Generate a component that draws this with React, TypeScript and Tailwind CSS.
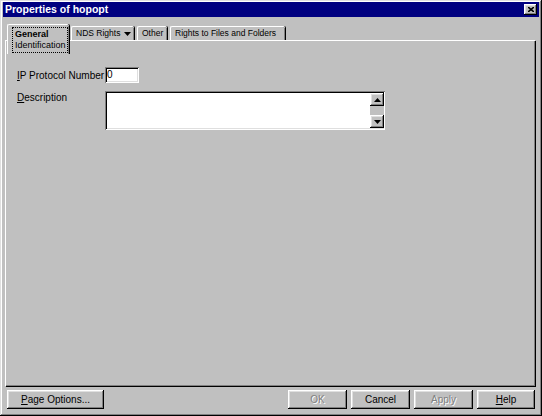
const raised =
  "shadow-[inset_-1px_-1px_#000000,inset_1px_1px_#ffffff,inset_-2px_-2px_#808080,inset_2px_2px_#dfdfdf]";
const sunken =
  "shadow-[inset_1px_1px_#808080,inset_-1px_-1px_#ffffff,inset_2px_2px_#000000,inset_-2px_-2px_#dfdfdf]";

const Button = ({
  children,
  width,
  disabled,
}: {
  children: React.ReactNode;
  width: string;
  disabled?: boolean;
}) => (
  <div
    className={`${width} h-[19px] flex items-center justify-center bg-[#c0c0c0] text-[10px] ${raised} ${
      disabled ? "text-[#808080] [text-shadow:1px_1px_#ffffff]" : "text-black"
    }`}
  >
    {children}
  </div>
);

const ScrollButton = ({ up }: { up?: boolean }) => (
  <div className={`w-[14px] h-[13px] flex items-center justify-center bg-[#c0c0c0] ${raised}`}>
    <svg width="7" height="4" viewBox="0 0 7 4">
      <polygon points={up ? "3.5,0 7,4 0,4" : "0,0 7,0 3.5,4"} fill="#000" />
    </svg>
  </div>
);

const Tab = ({ children, width, ml }: { children: React.ReactNode; width: string; ml: string }) => (
  <div
    className={`${width} ${ml} shrink-0 mt-[2px] h-[14px] flex items-center whitespace-nowrap pl-[4px] text-[8.5px] leading-none text-black border-l border-t border-white rounded-tl-[2px] rounded-tr-[2px] shadow-[inset_-1px_0_#808080,1px_0_#000000]`}
  >
    {children}
  </div>
);

export default function App() {
  return (
    <div
      className="w-[542px] h-[416px] bg-[#c0c0c0] flex flex-col px-[3px] pt-[2px] shadow-[inset_-1px_-1px_#000000,inset_1px_1px_#dfdfdf,inset_-2px_-2px_#808080,inset_2px_2px_#ffffff] overflow-hidden"
      style={{ fontFamily: '"Liberation Sans", Arial, sans-serif' }}
    >
      {/* title bar */}
      <div className="h-[15px] bg-[#000080] flex items-center justify-between pl-[2px] pr-[2px]">
        <span className="text-white text-[10.5px] font-bold leading-none">Properties of hopopt</span>
        <div className={`w-[13px] h-[11px] bg-[#c0c0c0] flex items-center justify-center ${raised}`}>
          <svg width="6" height="5" viewBox="0 0 6 5">
            <path d="M0 0 L6 5 M6 0 L0 5" stroke="#000" strokeWidth="1.6" />
          </svg>
        </div>
      </div>

      {/* tabs */}
      <div className="mt-[7px] h-[16px] flex items-start pl-[4px]">
        <div className="relative z-10 shrink-0 w-[62px] h-[30px] bg-[#c0c0c0] border-l border-t border-white rounded-tl-[2px] rounded-tr-[2px] shadow-[inset_-1px_0_#808080,1px_0_#000000] pt-[2px] pl-[4px] pr-[1px]">
          <div className="h-[26px] border border-dotted border-black flex flex-col pl-[2px] text-[9px] leading-[11px] text-black whitespace-nowrap">
            <span className="font-bold mt-[1px]">General</span>
            <span>Identification</span>
          </div>
        </div>
        <Tab width="w-[63px]" ml="ml-[2px]">
          <span>NDS Rights</span>
          <svg width="7" height="4" viewBox="0 0 7 4" className="ml-[4px] shrink-0">
            <polygon points="0,0 7,0 3.5,4" fill="#000" />
          </svg>
        </Tab>
        <Tab width="w-[30px]" ml="ml-[3px]">
          Other
        </Tab>
        <Tab width="w-[115px]" ml="ml-[3px]">
          Rights to Files and Folders
        </Tab>
      </div>

      {/* page */}
      <div className="ml-[2px] mr-[4px] h-[346px] border-l border-t border-white shadow-[inset_-1px_-1px_#808080,1px_1px_#000000] pt-[26px] pl-[11px]">
        <div className="grid grid-cols-[88px_auto] gap-y-[8px] text-[10px] leading-[12px] text-black">
          <div className="h-[16px] flex items-center whitespace-nowrap pt-[1px]">
            <span>
              <span className="underline">I</span>P Protocol Number
            </span>
          </div>
          <div className={`w-[34px] h-[16px] bg-white ${sunken} pl-[2px] flex items-center`}>0</div>

          <div className="pt-[1px]">
            <span className="underline">D</span>escription
          </div>
          <div className={`w-[280px] h-[39px] bg-white ${sunken} py-[2px] pr-[1px] flex justify-end`}>
            <div className="w-[14px] flex flex-col bg-[#c0c0c0]">
              <ScrollButton up />
              <div className="flex-1" />
              <ScrollButton />
            </div>
          </div>
        </div>
      </div>

      {/* buttons */}
      <div className="mt-[4px] flex items-start pl-[4px] pr-[4px]">
        <Button width="w-[97px]">
          <span>
            <span className="underline">P</span>age Options...
          </span>
        </Button>
        <div className="ml-auto flex gap-[4px]">
          <Button width="w-[59px]" disabled>
            OK
          </Button>
          <Button width="w-[59px]">Cancel</Button>
          <Button width="w-[59px]" disabled>
            Apply
          </Button>
          <Button width="w-[58px]">
            <span>
              <span className="underline">H</span>elp
            </span>
          </Button>
        </div>
      </div>
    </div>
  );
}
